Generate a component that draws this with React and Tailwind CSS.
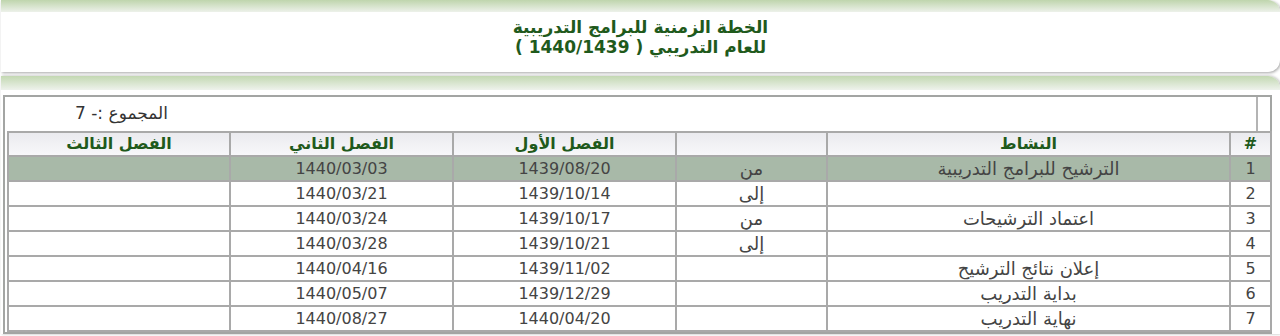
import React from "react";

const rows = [
  { id: 1, activity: "الترشيح للبرامج التدريبية", mark: "من", first: "1439/08/20", second: "1440/03/03", third: "" },
  { id: 2, activity: "", mark: "إلى", first: "1439/10/14", second: "1440/03/21", third: "" },
  { id: 3, activity: "اعتماد الترشيحات", mark: "من", first: "1439/10/17", second: "1440/03/24", third: "" },
  { id: 4, activity: "", mark: "إلى", first: "1439/10/21", second: "1440/03/28", third: "" },
  { id: 5, activity: "إعلان نتائج الترشيح", mark: "", first: "1439/11/02", second: "1440/04/16", third: "" },
  { id: 6, activity: "بداية التدريب", mark: "", first: "1439/12/29", second: "1440/05/07", third: "" },
  { id: 7, activity: "نهاية التدريب", mark: "", first: "1440/04/20", second: "1440/08/27", third: "" },
];

const headers = [
  { label: "#", w: "w-[41px]" },
  { label: "النشاط", w: "w-[403px]" },
  { label: "", w: "w-[151px]" },
  { label: "الفصل الأول", w: "w-[223px]" },
  { label: "الفصل الثاني", w: "w-[223px]" },
  { label: "الفصل الثالث", w: "w-[222px]" },
];

const cell = "border-2 border-[#a9a9a9] p-0 text-center leading-[20px]";

function TitlePanel() {
  return (
    <div className="h-[72px] w-[1279px] rounded-r-xl bg-white shadow-[1px_1px_3px_rgba(0,0,0,0.35)] overflow-hidden">
      <div className="h-[12px] bg-gradient-to-b from-[#bfd5ad] to-[#edf1ea]" />
      <div className="pt-[5px] text-center font-bold text-[17px] leading-[20px] text-[#1f5a1c]">
        <div>الخطة الزمنية للبرامج التدريبية</div>
        <div>للعام التدريبي ( 1440/1439 )</div>
      </div>
    </div>
  );
}

export default function App() {
  return (
    <div
      dir="rtl"
      className="w-[1280px] h-[336px] overflow-hidden bg-white"
      style={{ fontFamily: '"DejaVu Sans", "Noto Sans", sans-serif' }}
    >
      <TitlePanel />
      <div className="mt-[4px] w-[1279px] rounded-tr-xl bg-white shadow-[1px_0_3px_rgba(0,0,0,0.3)]">
        <div className="h-[14px] rounded-tr-xl bg-gradient-to-b from-[#c3d8b2] to-[#eef2ec]" />
        <div className="pt-[5px] pr-[8px]">
          <div className="w-[1269px] border-2 border-[#a3a5a3] bg-white">
            <div className="flex h-[34px]">
              <div className="w-[14px] border-l-2 border-[#b4b4b4]" />
              <div className="flex-1 flex items-center justify-end pl-[70px] text-[17px] text-[#333]">
                المجموع :- 7
              </div>
            </div>
            <table className="border-collapse table-fixed w-[1265px] -mr-[2px] text-[16px]">
              <thead>
                <tr className="h-[24px] bg-gradient-to-b from-[#eaeaee] to-[#f8f8fa]">
                  {headers.map((h, i) => (
                    <th
                      key={i}
                      className={`${h.w} border-2 border-[#a9a9a9] p-0 font-bold text-[16px] text-[#1f5a1c] leading-[20px]`}
                    >
                      {h.label}
                    </th>
                  ))}
                </tr>
              </thead>
              <tbody>
                {rows.map((r) => (
                  <tr
                    key={r.id}
                    className={`h-[25px] text-[#444] ${r.id === 1 ? "bg-[#a8b9a8]" : "bg-white"}`}
                  >
                    <td className={cell}>{r.id}</td>
                    <td className={`${cell} text-[18px]`}>{r.activity}</td>
                    <td className={`${cell} text-[18px]`}>{r.mark}</td>
                    <td className={cell}>{r.first}</td>
                    <td className={cell}>{r.second}</td>
                    <td className={cell}>{r.third}</td>
                  </tr>
                ))}
              </tbody>
            </table>
          </div>
        </div>
      </div>
    </div>
  );
}
